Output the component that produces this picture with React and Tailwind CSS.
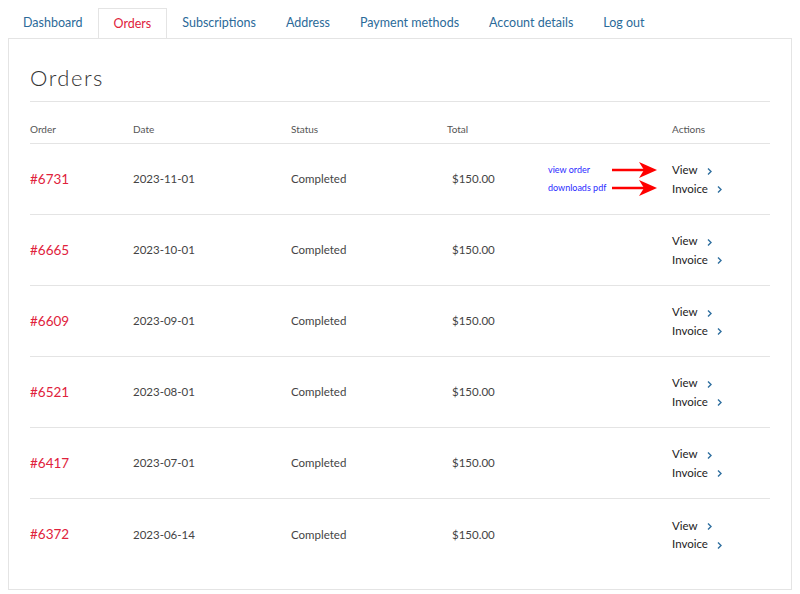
const tabs = ["Dashboard", "Orders", "Subscriptions", "Address", "Payment methods", "Account details", "Log out"];
const orders = [
  ["#6731", "2023-11-01"],
  ["#6665", "2023-10-01"],
  ["#6609", "2023-09-01"],
  ["#6521", "2023-08-01"],
  ["#6417", "2023-07-01"],
  ["#6372", "2023-06-14"],
];

const Chevron = () => (
  <svg width="7" height="9" viewBox="0 0 7 9" className="ml-2 inline-block">
    <path d="M2 1.5 L5 4.5 L2 7.5" fill="none" stroke="#2f6f9f" strokeWidth="1.4" />
  </svg>
);

const Arrow = () => (
  <svg width="46" height="18" viewBox="0 0 46 18">
    <line x1="0" y1="9" x2="32" y2="9" stroke="#f00" strokeWidth="2.5" />
    <path d="M27 1 L45 9 L27 17 L32 9 Z" fill="#f00" />
  </svg>
);

export default function App() {
  return (
    <div className="h-[594px] w-[800px] bg-white pt-[8px] text-[#333]" style={{ fontFamily: "Lato, 'Open Sans', sans-serif" }}>
      <div className="flex pl-[8px] text-[12.5px]">
        {tabs.map((t) => (
          <div
            key={t}
            className={
              t === "Orders"
                ? "relative z-10 -mb-px h-[30px] border border-b-0 border-[#e4e4e4] bg-white px-[15px] pt-[6px] text-[#e0223c]"
                : "h-[30px] px-[15px] pt-[6px] text-[#2b6a99]"
            }
          >
            {t}
          </div>
        ))}
      </div>
      <div className="mx-[8px] h-[552px] border border-[#e4e4e4] px-[21px]">
        <h1 className="border-b border-[#e4e4e4] pb-[7px] pt-[22px] text-[22px] font-light tracking-[1.5px] text-[#333]">Orders</h1>
        <div className="flex h-[42px] items-end border-b border-[#e4e4e4] pb-[6px] text-[10px] text-[#555]">
          <div className="w-[103px]">Order</div>
          <div className="w-[158px]">Date</div>
          <div className="w-[156px]">Status</div>
          <div className="w-[225px]">Total</div>
          <div>Actions</div>
        </div>
        {orders.map(([id, date], i) => (
          <div key={id} className={"flex h-[71px] items-center text-[11.5px] text-[#444] " + (i < 5 ? "border-b border-[#e4e4e4]" : "")}>
            <div className="w-[103px] text-[13.5px] text-[#e0223c]">{id}</div>
            <div className="w-[158px]">{date}</div>
            <div className="w-[156px]">Completed</div>
            <div className="w-[101px] pl-[5px]">$150.00</div>
            <div className="w-[124px]">
              {i === 0 && (
                <div className="flex flex-col text-[9px] text-[#2a2aff]">
                  <div className="flex items-center justify-between"><span>view order</span><span className="mr-[14px]"><Arrow /></span></div>
                  <div className="flex items-center justify-between"><span>downloads pdf</span><span className="mr-[14px]"><Arrow /></span></div>
                </div>
              )}
            </div>
            <div className="flex flex-col gap-[1px] text-[11.5px] text-[#222]">
              <div>View<Chevron /></div>
              <div>Invoice<Chevron /></div>
            </div>
          </div>
        ))}
      </div>
    </div>
  );
}
